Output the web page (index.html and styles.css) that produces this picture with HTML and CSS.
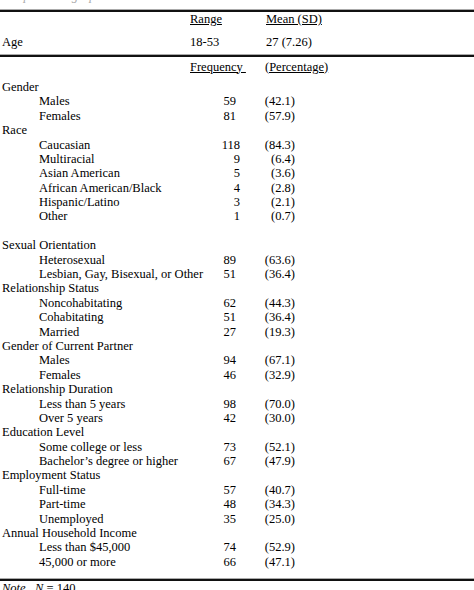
FILE: index.html
```html
<!DOCTYPE html>
<html>
<head>
<meta charset="utf-8">
<link rel="stylesheet" href="styles.css">
</head>
<body>
<div class="page">
  <div class="caption">Sample Demographics</div>
  <div class="rule rule-top"></div>
  <div class="row head">
    <span class="lab"></span>
    <span class="h2"><u>Range</u></span>
    <span class="h3"><u>Mean (SD)</u></span>
  </div>
  <div class="row age">
    <span class="lab">Age</span>
    <span class="h2">18-53</span>
    <span class="h3">27 (7.26)</span>
  </div>
  <div class="rule rule-mid"></div>
  <div class="row head2">
    <span class="lab"></span>
    <span class="h2"><u>Frequency&nbsp;</u></span>
    <span class="h3"><u>(Percentage)</u></span>
  </div>
  <div class="body">
    <div class="row"><span class="lab">Gender</span></div>
    <div class="row"><span class="lab sub">Males</span><span class="f d2">59</span><span class="p">(42.1)</span></div>
    <div class="row"><span class="lab sub">Females</span><span class="f d2">81</span><span class="p">(57.9)</span></div>
    <div class="row"><span class="lab">Race</span></div>
    <div class="row"><span class="lab sub">Caucasian</span><span class="f">118</span><span class="p">(84.3)</span></div>
    <div class="row"><span class="lab sub">Multiracial</span><span class="f">9</span><span class="p">(6.4)</span></div>
    <div class="row"><span class="lab sub">Asian American</span><span class="f">5</span><span class="p">(3.6)</span></div>
    <div class="row"><span class="lab sub">African American/Black</span><span class="f">4</span><span class="p">(2.8)</span></div>
    <div class="row"><span class="lab sub">Hispanic/Latino</span><span class="f">3</span><span class="p">(2.1)</span></div>
    <div class="row"><span class="lab sub">Other</span><span class="f">1</span><span class="p">(0.7)</span></div>
    <div class="row"><span class="lab">&nbsp;</span></div>
    <div class="row"><span class="lab">Sexual Orientation</span></div>
    <div class="row"><span class="lab sub">Heterosexual</span><span class="f d2">89</span><span class="p">(63.6)</span></div>
    <div class="row"><span class="lab sub">Lesbian, Gay, Bisexual, or Other</span><span class="f d2">51</span><span class="p">(36.4)</span></div>
    <div class="row"><span class="lab">Relationship Status</span></div>
    <div class="row"><span class="lab sub">Noncohabitating</span><span class="f d2">62</span><span class="p">(44.3)</span></div>
    <div class="row"><span class="lab sub">Cohabitating</span><span class="f d2">51</span><span class="p">(36.4)</span></div>
    <div class="row"><span class="lab sub">Married</span><span class="f d2">27</span><span class="p">(19.3)</span></div>
    <div class="row"><span class="lab">Gender of Current Partner</span></div>
    <div class="row"><span class="lab sub">Males</span><span class="f d2">94</span><span class="p">(67.1)</span></div>
    <div class="row"><span class="lab sub">Females</span><span class="f d2">46</span><span class="p">(32.9)</span></div>
    <div class="row"><span class="lab">Relationship Duration</span></div>
    <div class="row"><span class="lab sub">Less than 5 years</span><span class="f d2">98</span><span class="p">(70.0)</span></div>
    <div class="row"><span class="lab sub">Over 5 years</span><span class="f d2">42</span><span class="p">(30.0)</span></div>
    <div class="row"><span class="lab">Education Level</span></div>
    <div class="row"><span class="lab sub">Some college or less</span><span class="f d2">73</span><span class="p">(52.1)</span></div>
    <div class="row"><span class="lab sub">Bachelor’s degree or higher</span><span class="f d2">67</span><span class="p">(47.9)</span></div>
    <div class="row"><span class="lab">Employment Status</span></div>
    <div class="row"><span class="lab sub">Full-time</span><span class="f d2">57</span><span class="p">(40.7)</span></div>
    <div class="row"><span class="lab sub">Part-time</span><span class="f d2">48</span><span class="p">(34.3)</span></div>
    <div class="row"><span class="lab sub">Unemployed</span><span class="f d2">35</span><span class="p">(25.0)</span></div>
    <div class="row"><span class="lab">Annual Household Income</span></div>
    <div class="row"><span class="lab sub">Less than $45,000</span><span class="f d2">74</span><span class="p">(52.9)</span></div>
    <div class="row"><span class="lab sub">45,000 or more</span><span class="f d2">66</span><span class="p">(47.1)</span></div>
  </div>
  <div class="rule rule-bottom"></div>
  <div class="note"><i>Note</i>.&nbsp; <i>N</i> = 140</div>
</div>
</body>
</html>
```

FILE: styles.css
```css
html, body {
  margin: 0;
  padding: 0;
  background: #fff;
}
body {
  width: 474px;
  height: 590px;
  overflow: hidden;
  font-family: "Liberation Serif", "Times New Roman", serif;
  font-size: 12.5px;
  line-height: 14.4px;
  color: #000;
}
.page {
  width: 474px;
}
.caption {
  margin-top: -11px;
  height: 14.4px;
  padding-left: 2px;
  font-style: italic;
  color: #aaa;
}
.rule {
  height: 2px;
  border-top: 1px solid #aaa;
  background: #111;
}
.rule-top {
  margin-top: 5.6px;
}
.rule-mid {
  margin-top: 4.2px;
}
.rule-bottom {
  margin-top: 8.4px;
}
.row {
  display: grid;
  grid-template-columns: 190px 50px 55px 1fr;
  height: 14.4px;
  white-space: nowrap;
}
.lab {
  padding-left: 2px;
}
.lab.sub {
  padding-left: 39px;
}
.h2 {
  grid-column: 2 / 3;
}
.h3 {
  grid-column: 3 / 5;
  padding-left: 26px;
}
.age {
  margin-top: 9px;
}
.head2 {
  margin-top: 2.6px;
}
.head2 .h3 {
  padding-left: 25px;
}
.body {
  margin-top: 6px;
}
.f {
  grid-column: 2 / 3;
  text-align: right;
}
.f.d2 {
  padding-right: 4px;
}
.p {
  grid-column: 3 / 4;
  text-align: right;
}
.note {
  padding-left: 2px;
  margin-top: 0.4px;
  height: 14.4px;
}
```
